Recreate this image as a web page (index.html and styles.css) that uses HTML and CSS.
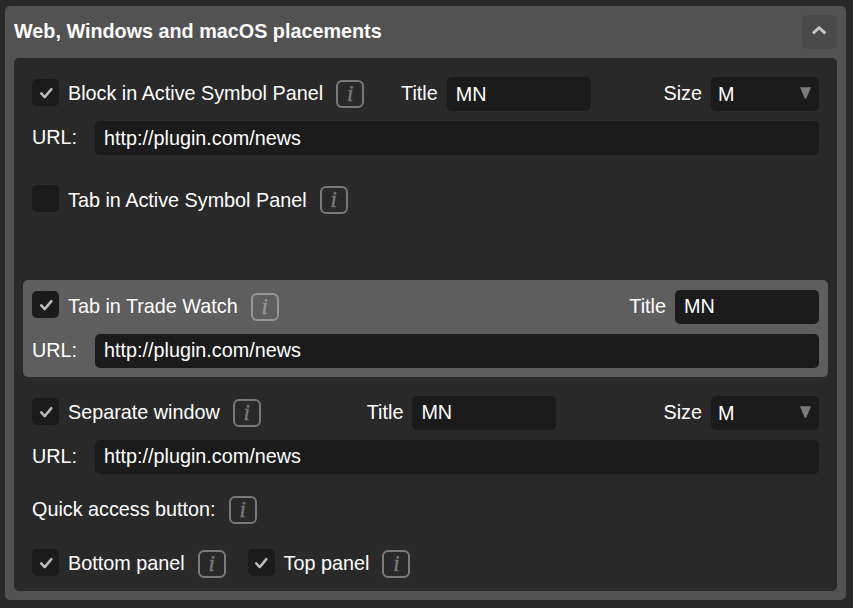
FILE: index.html
```html
<!DOCTYPE html>
<html lang="en">
<head>
  <meta charset="UTF-8" />
  <meta name="viewport" content="width=device-width, initial-scale=1" />
  <title>Web, Windows and macOS placements</title>
  <link rel="stylesheet" href="styles.css">
</head>
<body>
  <!-- shared icons -->
  <svg class="sprite" width="0" height="0" aria-hidden="true">
    <symbol id="check" viewBox="0 0 27 27">
      <path d="M9.2 14.3l3.5 3.8 6.7-8" fill="none" stroke="#bcbcbc" stroke-width="2.5" stroke-linecap="round" stroke-linejoin="round" />
    </symbol>
    <symbol id="arrow" viewBox="0 0 11 12">
      <path d="M0 0.2h11L6.2 11.7H4.8z" fill="#7b7b7b" />
    </symbol>
  </svg>

  <div class="panel">
    <div class="panel-header">
      <div class="panel-title">Web, Windows and macOS placements</div>
      <div class="collapse" role="button" aria-label="Collapse">
        <svg width="35" height="34" viewBox="0 0 35 34">
          <path d="M11 18.4L17.1 12.7 23.3 18.4" fill="none" stroke="#c6c6c6" stroke-width="3" />
        </svg>
      </div>
    </div>

    <div class="panel-body">
      <div class="section">
        <div class="row low">
          <div class="checkbox"><svg><use href="#check" /></svg></div>
          <div class="label">Block in Active Symbol Panel</div>
          <div class="info">i</div>
          <div class="group title-block">
            <div class="label">Title</div>
            <div class="field short low-text">MN</div>
          </div>
          <div class="group right">
            <div class="label">Size</div>
            <div class="field select low-text">M<svg><use href="#arrow" /></svg></div>
          </div>
        </div>
        <div class="row url">
          <div class="label">URL:</div>
          <div class="field low-text">http://plugin.com/news</div>
        </div>
      </div>

      <div class="section">
        <div class="row tab">
          <div class="checkbox"></div>
          <div class="label">Tab in Active Symbol Panel</div>
          <div class="info">i</div>
        </div>
      </div>

      <div class="section active">
        <div class="row">
          <div class="checkbox"><svg><use href="#check" /></svg></div>
          <div class="label">Tab in Trade Watch</div>
          <div class="info">i</div>
          <div class="group right">
            <div class="label">Title</div>
            <div class="field short">MN</div>
          </div>
        </div>
        <div class="row url">
          <div class="label">URL:</div>
          <div class="field">http://plugin.com/news</div>
        </div>
      </div>

      <div class="section">
        <div class="row low">
          <div class="checkbox"><svg><use href="#check" /></svg></div>
          <div class="label">Separate window</div>
          <div class="info">i</div>
          <div class="group title-window">
            <div class="label">Title</div>
            <div class="field short">MN</div>
          </div>
          <div class="group right">
            <div class="label">Size</div>
            <div class="field select low-text">M<svg><use href="#arrow" /></svg></div>
          </div>
        </div>
        <div class="row url">
          <div class="label">URL:</div>
          <div class="field">http://plugin.com/news</div>
        </div>
      </div>

      <div class="quick">
        <div class="row">
          <div class="label">Quick access button:</div>
          <div class="info">i</div>
        </div>
        <div class="row low">
          <div class="checkbox"><svg><use href="#check" /></svg></div>
          <div class="label">Bottom panel</div>
          <div class="info">i</div>
          <div class="checkbox second"><svg><use href="#check" /></svg></div>
          <div class="label">Top panel</div>
          <div class="info">i</div>
        </div>
      </div>
    </div>
  </div>
</body>
</html>
```

FILE: styles.css
```css
* {
  box-sizing: border-box;
}
body {
  margin: 0;
  padding: 6px 7px 8px 5px;
  height: 608px;
  background: #292929;
  color: #fff;
  font-family: "Liberation Sans", Arial, sans-serif;
  font-size: 19.8px;
  line-height: 34px;
  white-space: nowrap;
}
.sprite {
  position: absolute;
}
.panel {
  height: 594px;
  padding: 9px;
  background: #525252;
  border-radius: 5px;
}
.panel-header {
  display: flex;
  justify-content: space-between;
  height: 43px;
}
.panel-title {
  font-weight: 700;
  line-height: 32px;
}
.collapse {
  width: 35px;
  height: 34px;
  background: #4a4a4a;
  border-radius: 5px;
}
.collapse svg {
  display: block;
}
.panel-body {
  height: 533px;
  padding: 9px;
  background: #292929;
  border-radius: 5px;
}
/* placements */
.section {
  height: 97px;
  margin-bottom: 9px;
  padding: 10px 9px 9px;
  border-radius: 5px;
}
.section:first-child {
  margin-bottom: 10px;
}
.section:nth-child(4) {
  margin-bottom: 0;
}
.section.active {
  background: #5e5e5e;
}
.row {
  display: flex;
  align-items: flex-start;
  height: 34px;
}
.row.url {
  margin-top: 10px;
}
.label {
  line-height: 33px;
}
.url .label {
  width: 63px;
}
.checkbox {
  width: 27px;
  height: 27px;
  margin: 1px 9px 0 0;
  background: #1b1b1b;
  border-radius: 5px;
}
.low .checkbox {
  margin-top: 2px;
}
.checkbox svg {
  display: block;
  width: 27px;
  height: 27px;
}
.info {
  width: 28px;
  height: 28px;
  margin: 3px 0 0 13px;
  border: 2px solid #797979;
  border-radius: 6px;
  color: #797979;
  font: italic 23px/24px "Liberation Serif", serif;
  -webkit-text-stroke: 0.4px;
  text-align: center;
}
.tab .info {
  margin-top: 2px;
}
.active .info {
  border-color: #969696;
  color: #969696;
}
.group {
  display: flex;
  gap: 9px;
}
.right {
  margin-left: auto;
}
.title-block {
  margin-left: 37px;
}
.title-window {
  margin-left: 106px;
}
.field {
  flex: 1;
  height: 34px;
  padding-left: 9px;
  background: #1b1b1b;
  border-radius: 5px;
  line-height: 33px;
}
.low-text {
  line-height: 35px;
}
.short {
  flex: none;
  width: 144px;
}
.select {
  display: flex;
  flex: none;
  justify-content: space-between;
  width: 108px;
  padding: 0 8px 0 7px;
}
.select svg {
  flex: none;
  width: 11px;
  height: 12px;
  margin-top: 10px;
}
/* quick access */
.quick {
  padding: 10px 9px;
}
.quick .row {
  height: 54px;
}
.second {
  margin-left: 22px;
}
.second svg {
  margin-left: -1px;
}
```
